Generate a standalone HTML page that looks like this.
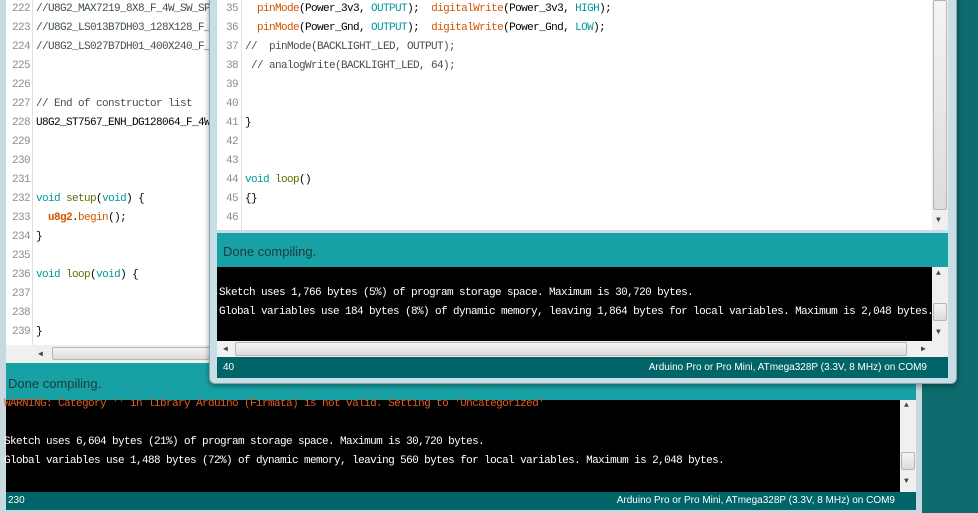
<!DOCTYPE html>
<html><head><meta charset="utf-8"><style>
*{margin:0;padding:0;box-sizing:border-box}
body{width:978px;height:513px;overflow:hidden;background:#0e6b6e;position:relative;font-family:"Liberation Mono",monospace}
.abs{position:absolute}
.code{font-size:11px;letter-spacing:-0.6px;line-height:19px;white-space:pre;color:#000}
.ln{color:#8c8c8c;text-align:right}
.o{color:#d35400}.t{color:#00979c}.g{color:#5e6d03}.c{color:#434f54}
.ui{font-family:"Liberation Sans",sans-serif}
.con{font-size:11px;letter-spacing:-0.6px;line-height:19px;white-space:pre;color:#fff}
.sb{background:#f0f0f0}
.thumb{background:linear-gradient(#f4f4f4,#dcdcdc);border:1px solid #b5b5b5;border-radius:2px}
</style></head><body>

<!-- back window -->
<div class="abs" style="left:0;top:0;width:922px;height:513px;background:#c8d8e0"></div>
<div class="abs" style="left:6px;top:0;width:910px;height:345px;background:#fff"></div>
<div class="abs" style="left:6px;top:0;width:27px;height:345px;background:#fff;border-right:1px solid #e0e0e0"></div>
<div class="abs code ln" style="left:4px;top:0px;width:26px">222
223
224
225
226
227
228
229
230
231
232
233
234
235
236
237
238
239</div>
<div class="abs code" style="left:36px;top:0px"><span class="c">//U8G2_MAX7219_8X8_F_4W_SW_SPI</span>
<span class="c">//U8G2_LS013B7DH03_128X128_F_</span>
<span class="c">//U8G2_LS027B7DH01_400X240_F_</span>


<span class="c">// End of constructor list</span>
U8G2_ST7567_ENH_DG128064_F_4W



<span class="t">void</span> <span class="g">setup</span>(<span class="t">void</span>) {
  <b class="o">u8g2</b>.<span class="o">begin</span>();
}

<span class="t">void</span> <span class="g">loop</span>(<span class="t">void</span>) {


}</div>
<div class="abs sb" style="left:6px;top:345px;width:910px;height:18px"></div>
<div class="abs" style="left:38px;top:349px;font-size:8px;color:#444">◀</div>
<div class="abs thumb" style="left:52px;top:347px;width:170px;height:13px"></div>
<div class="abs ui" style="left:6px;top:363px;width:910px;height:37px;background:#17a1a5;color:#1d3a3b;font-size:13px;padding:13px 0 0 2px">Done compiling.</div>
<div class="abs" style="left:6px;top:400px;width:894px;height:92px;background:#000"></div>
<div class="abs con" style="left:4px;top:395px"><span style="color:#e05a1e">WARNING: Category '' in library Arduino (Firmata) is not valid. Setting to 'Uncategorized'</span>

Sketch uses 6,604 bytes (21%) of program storage space. Maximum is 30,720 bytes.
Global variables use 1,488 bytes (72%) of dynamic memory, leaving 560 bytes for local variables. Maximum is 2,048 bytes.</div>
<div class="abs sb" style="left:900px;top:400px;width:16px;height:92px"></div>
<div class="abs" style="left:904px;top:401px;font-size:8px;color:#444">▲</div>
<div class="abs thumb" style="left:901px;top:452px;width:14px;height:18px"></div>
<div class="abs" style="left:904px;top:477px;font-size:8px;color:#444">▼</div>
<div class="abs ui" style="left:6px;top:492px;width:910px;height:18px;background:#006468;color:#fff;font-size:10px;padding:3px 0 0 2px">230<span style="position:absolute;right:21px">Arduino Pro or Pro Mini, ATmega328P (3.3V, 8 MHz) on COM9</span></div>

<!-- front window -->
<div class="abs" style="left:209px;top:-4px;width:748px;height:388px;background:#c9dde6;border:1px solid #8aa4b0;border-radius:0 0 6px 6px;box-shadow:0 2px 6px rgba(0,0,0,.4)"></div>
<div class="abs" style="left:217px;top:0;width:731px;height:230px;background:#fff"></div>
<div class="abs" style="left:217px;top:0;width:25px;height:230px;border-right:1px solid #e0e0e0"></div>
<div class="abs code ln" style="left:214px;top:0px;width:24px">35
36
37
38
39
40
41
42
43
44
45
46</div>
<div class="abs code" style="left:245px;top:0px">  <span class="o">pinMode</span>(Power_3v3, <span class="t">OUTPUT</span>);  <span class="o">digitalWrite</span>(Power_3v3, <span class="t">HIGH</span>);
  <span class="o">pinMode</span>(Power_Gnd, <span class="t">OUTPUT</span>);  <span class="o">digitalWrite</span>(Power_Gnd, <span class="t">LOW</span>);
<span class="c">//  pinMode(BACKLIGHT_LED, OUTPUT);</span>
<span class="c"> // analogWrite(BACKLIGHT_LED, 64);</span>


}


<span class="t">void</span> <span class="g">loop</span>()
{}</div>
<div class="abs sb" style="left:932px;top:0;width:16px;height:230px"></div>
<div class="abs thumb" style="left:933px;top:0;width:14px;height:210px"></div>
<div class="abs" style="left:936px;top:216px;font-size:8px;color:#444">▼</div>
<div class="abs ui" style="left:217px;top:233px;width:731px;height:34px;background:#17a1a5;color:#1d3a3b;font-size:13px;padding:11px 0 0 6px">Done compiling.</div>
<div class="abs" style="left:217px;top:267px;width:715px;height:74px;background:#000"></div>
<div class="abs con" style="left:219px;top:284px">Sketch uses 1,766 bytes (5%) of program storage space. Maximum is 30,720 bytes.
Global variables use 184 bytes (8%) of dynamic memory, leaving 1,864 bytes for local variables. Maximum is 2,048 bytes.</div>
<div class="abs sb" style="left:932px;top:267px;width:16px;height:74px"></div>
<div class="abs" style="left:936px;top:269px;font-size:8px;color:#444">▲</div>
<div class="abs thumb" style="left:933px;top:303px;width:14px;height:18px"></div>
<div class="abs" style="left:936px;top:328px;font-size:8px;color:#444">▼</div>
<div class="abs sb" style="left:217px;top:341px;width:731px;height:16px"></div>
<div class="abs" style="left:223px;top:344px;font-size:8px;color:#444">◀</div>
<div class="abs thumb" style="left:235px;top:342px;width:672px;height:14px"></div>
<div class="abs" style="left:921px;top:344px;font-size:8px;color:#444">▶</div>
<div class="abs ui" style="left:217px;top:357px;width:731px;height:21px;background:#006468;color:#fff;font-size:10px;padding:5px 0 0 6px">40<span style="position:absolute;right:21px">Arduino Pro or Pro Mini, ATmega328P (3.3V, 8 MHz) on COM9</span></div>
</body></html>
